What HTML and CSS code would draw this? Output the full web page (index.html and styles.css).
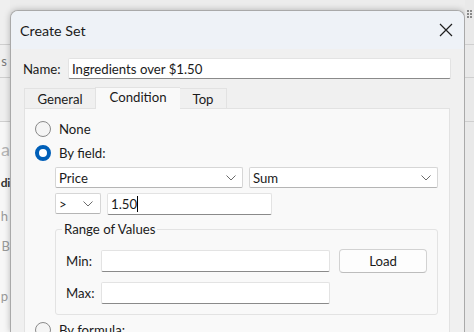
FILE: index.html
```html
<!DOCTYPE html>
<html>
<head>
<meta charset="utf-8">
<link rel="stylesheet" href="styles.css">
</head>
<body>
<div class="screen">
  <div class="bg-left">
    <div class="bg-cell h45"></div>
    <div class="bg-cell h33"><span class="bg-txt">s</span></div>
    <div class="bg-cell h44"></div>
    <div class="bg-lines">
      <div class="bg-line l-a"><span>a</span></div>
      <div class="bg-line l-di"><span>di</span></div>
      <div class="bg-line l-h"><span>h</span></div>
      <div class="bg-line l-b"><span>B</span></div>
      <div class="bg-line l-p"><span>p</span></div>
    </div>
  </div>

  <div class="dialog">
    <div class="titlebar">
      <span class="title">Create Set</span>
      <svg class="close" width="14" height="14" viewBox="0 0 14 14"><path d="M1 1 L13 13 M13 1 L1 13" stroke="#1f1f1f" stroke-width="1.2" fill="none"/></svg>
    </div>
    <div class="body">
      <div class="name-row">
        <span class="lbl name-lbl">Name:</span>
        <div class="field name-field">Ingredients over $1.50</div>
      </div>
      <div class="tabs">
        <div class="tab t-general">General</div>
        <div class="tab active t-condition">Condition</div>
        <div class="tab t-top">Top</div>
      </div>
      <div class="panel">
        <div class="radio-row">
          <span class="radio"></span><span class="lbl">None</span>
        </div>
        <div class="radio-row">
          <span class="radio on"></span><span class="lbl">By field:</span>
        </div>
        <div class="indent">
          <div class="row">
            <div class="select w-price"><span>Price</span><svg class="chev" width="10" height="6" viewBox="0 0 10 6"><path d="M0.5 0.5 L5 5 L9.5 0.5" stroke="#6b6b6b" stroke-width="1" fill="none"/></svg></div>
            <div class="select w-sum"><span>Sum</span><svg class="chev" width="10" height="6" viewBox="0 0 10 6"><path d="M0.5 0.5 L5 5 L9.5 0.5" stroke="#6b6b6b" stroke-width="1" fill="none"/></svg></div>
          </div>
          <div class="row row2">
            <div class="select w-op"><span>&gt;</span><svg class="chev" width="10" height="6" viewBox="0 0 10 6"><path d="M0.5 0.5 L5 5 L9.5 0.5" stroke="#6b6b6b" stroke-width="1" fill="none"/></svg></div>
            <div class="field w-val"><span>1.50</span><span class="caret"></span></div>
          </div>
          <div class="group">
            <span class="legend">Range of Values</span>
            <div class="grow">
              <span class="lbl glbl">Min:</span>
              <div class="field gfield"></div>
              <div class="btn">Load</div>
            </div>
            <div class="grow">
              <span class="lbl glbl">Max:</span>
              <div class="field gfield"></div>
            </div>
          </div>
        </div>
        <div class="radio-row formula">
          <span class="radio"></span><span class="lbl">By formula:</span>
        </div>
      </div>
    </div>
  </div>

  <div class="bg-right">
    <div class="bg-cell h45">
      <svg class="grip" width="6" height="9" viewBox="0 0 6 9"><g fill="#8a8a8a"><rect x="0" y="0" width="2" height="2"/><rect x="3" y="0" width="2" height="2"/><rect x="0" y="3" width="2" height="2"/><rect x="3" y="3" width="2" height="2"/><rect x="0" y="6" width="2" height="2"/><rect x="3" y="6" width="2" height="2"/></g></svg>
    </div>
    <div class="bg-cell h33"></div>
    <div class="bg-cell h44"></div>
  </div>
</div>
</body>
</html>
```

FILE: styles.css
```css
* { box-sizing: border-box; }
html, body { margin: 0; padding: 0; }
body {
  font-family: "Lato", "Open Sans", sans-serif;
  font-size: 13.2px;
  color: #1b1b1b;
  background: #ececec;
}
.screen {
  width: 474px;
  height: 332px;
  display: flex;
  overflow: hidden;
  background: #ececec;
}

/* background page behind the dialog */
.bg-left, .bg-right {
  flex: none;
  width: 10px;
  display: flex;
  flex-direction: column;
  overflow: hidden;
  background: #efefef;
}
.bg-right { width: 9px; background: #e9e9e9; }
.bg-cell {
  flex: none;
  display: flex;
  justify-content: flex-end;
  align-items: center;
  border-bottom: 1px solid #cfcfcf;
  overflow: hidden;
}
.h45 { height: 45px; }
.h33 { height: 33px; }
.h44 { height: 44px; }
.bg-txt { color: #777; font-size: 13px; white-space: nowrap; margin-right: 3px; }
.bg-lines {
  flex: 1;
  background: #f7f7f7;
  display: flex;
  flex-direction: column;
}
.bg-line {
  display: flex;
  justify-content: flex-end;
  white-space: nowrap;
  overflow: hidden;
  color: #9a9a9a;
  font-size: 13px;
}
.l-a { font-size: 18px; color: #b5b5b5; height: 26px; margin-top: 14px; line-height: 26px; }
.l-di { font-weight: 700; font-size: 12px; color: #333; height: 22px; line-height: 22px; margin-top: 10px; letter-spacing: -0.3px; }
.l-h { height: 20px; line-height: 20px; margin-top: 12px; margin-right: 2px; }
.l-b { height: 20px; line-height: 20px; margin-top: 10px; }
.l-p { height: 20px; line-height: 20px; margin-top: 30px; margin-right: 2px; }
.grip { display: block; margin-right: 1px; margin-bottom: 16px; }

/* dialog */
.dialog {
  flex: none;
  width: 455px;
  margin-top: 10px;
  border: 1px solid #a9a9a9;
  border-bottom: none;
  border-radius: 8px 8px 0 0;
  background: #f0f0f0;
  box-shadow: 0 0 6px rgba(0,0,0,0.25);
  display: flex;
  flex-direction: column;
  overflow: hidden;
}
.titlebar {
  flex: none;
  height: 38px;
  background: #eef2f7;
  display: flex;
  align-items: center;
  justify-content: space-between;
  padding: 0 11px 0 9px;
}
.title { font-size: 14.3px; color: #1a1a1a; }
.close { display: block; }

.body {
  flex: 1;
  padding: 9px 14px 0 13px;
  display: flex;
  flex-direction: column;
}
.lbl { white-space: nowrap; }
.name-row {
  display: flex;
  align-items: center;
  height: 21px;
  margin-right: -1px;
}
.name-lbl { width: 45px; margin-left: -1px; }
.field {
  background: #fff;
  border: 1px solid #e3e3e3;
  border-bottom-color: #8a8a8a;
  border-radius: 2px;
  display: flex;
  align-items: center;
  padding-left: 3px;
}
.name-field { flex: 1; height: 21px; }

.tabs {
  display: flex;
  align-items: flex-end;
  margin-top: 8px;
  height: 21px;
  position: relative;
  z-index: 1;
}
.tab {
  height: 20px;
  display: flex;
  align-items: center;
  justify-content: center;
  border: 1px solid #e2e2e2;
  border-bottom: none;
  border-right: none;
  background: #f0f0f0;
}
.t-general { width: 71px; }
.t-condition { width: 85px; }
.t-top { width: 47px; border-right: 1px solid #e2e2e2; }
.tab.active {
  height: 22px;
  margin-bottom: -1px;
  background: #f9f9f9;
  padding-bottom: 3px;
}
.tab.active + .tab { border-left: none; }

.panel {
  flex: 1;
  background: #f9f9f9;
  border: 1px solid #e2e2e2;
  border-bottom: none;
  padding: 12px 10px 0 10px;
  display: flex;
  flex-direction: column;
}
.radio-row {
  display: flex;
  align-items: center;
  height: 16px;
  margin-bottom: 8px;
}
.radio {
  flex: none;
  width: 16px;
  height: 16px;
  border-radius: 50%;
  border: 1px solid #8a8a8a;
  background: #f5f5f5;
  margin-right: 8px;
}
.radio.on {
  border: 4px solid #005fb8;
  background: #fff;
}
.indent {
  margin-left: 20px;
  margin-right: 1px;
  margin-top: -2px;
}
.row {
  display: flex;
  gap: 6px;
}
.row2 { margin-top: 5px; }
.select {
  height: 21px;
  background: #fff;
  border: 1px solid #d6d6d6;
  border-bottom-color: #b5b5b5;
  border-radius: 2px;
  display: flex;
  align-items: center;
  justify-content: space-between;
  padding: 0 6px 0 3px;
}
.chev { display: block; }
.w-price { width: 188px; }
.w-sum { width: 189px; }
.w-op { width: 46px; padding-right: 7px; }
.w-val { width: 165px; height: 22px; }
.caret { width: 1px; height: 16px; background: #000; }

.group {
  position: relative;
  margin-top: 14px;
  height: 86px;
  border: 1px solid #e3e3e3;
  border-radius: 3px;
  padding: 19px 10px 0 10px;
  display: flex;
  flex-direction: column;
  gap: 8px;
}
.legend {
  position: absolute;
  top: -10px;
  left: 6px;
  padding: 0 2px;
  background: #f9f9f9;
  line-height: 18px;
}
.grow {
  display: flex;
  align-items: center;
  height: 24px;
}
.glbl { width: 35px; }
.gfield { width: 229px; height: 22px; }
.btn {
  margin-left: 9px;
  width: 88px;
  height: 24px;
  background: #fdfdfd;
  border: 1px solid #d2d2d2;
  border-bottom-color: #bdbdbd;
  border-radius: 4px;
  display: flex;
  align-items: center;
  justify-content: center;
}
.formula { margin-top: 7px; }
```
